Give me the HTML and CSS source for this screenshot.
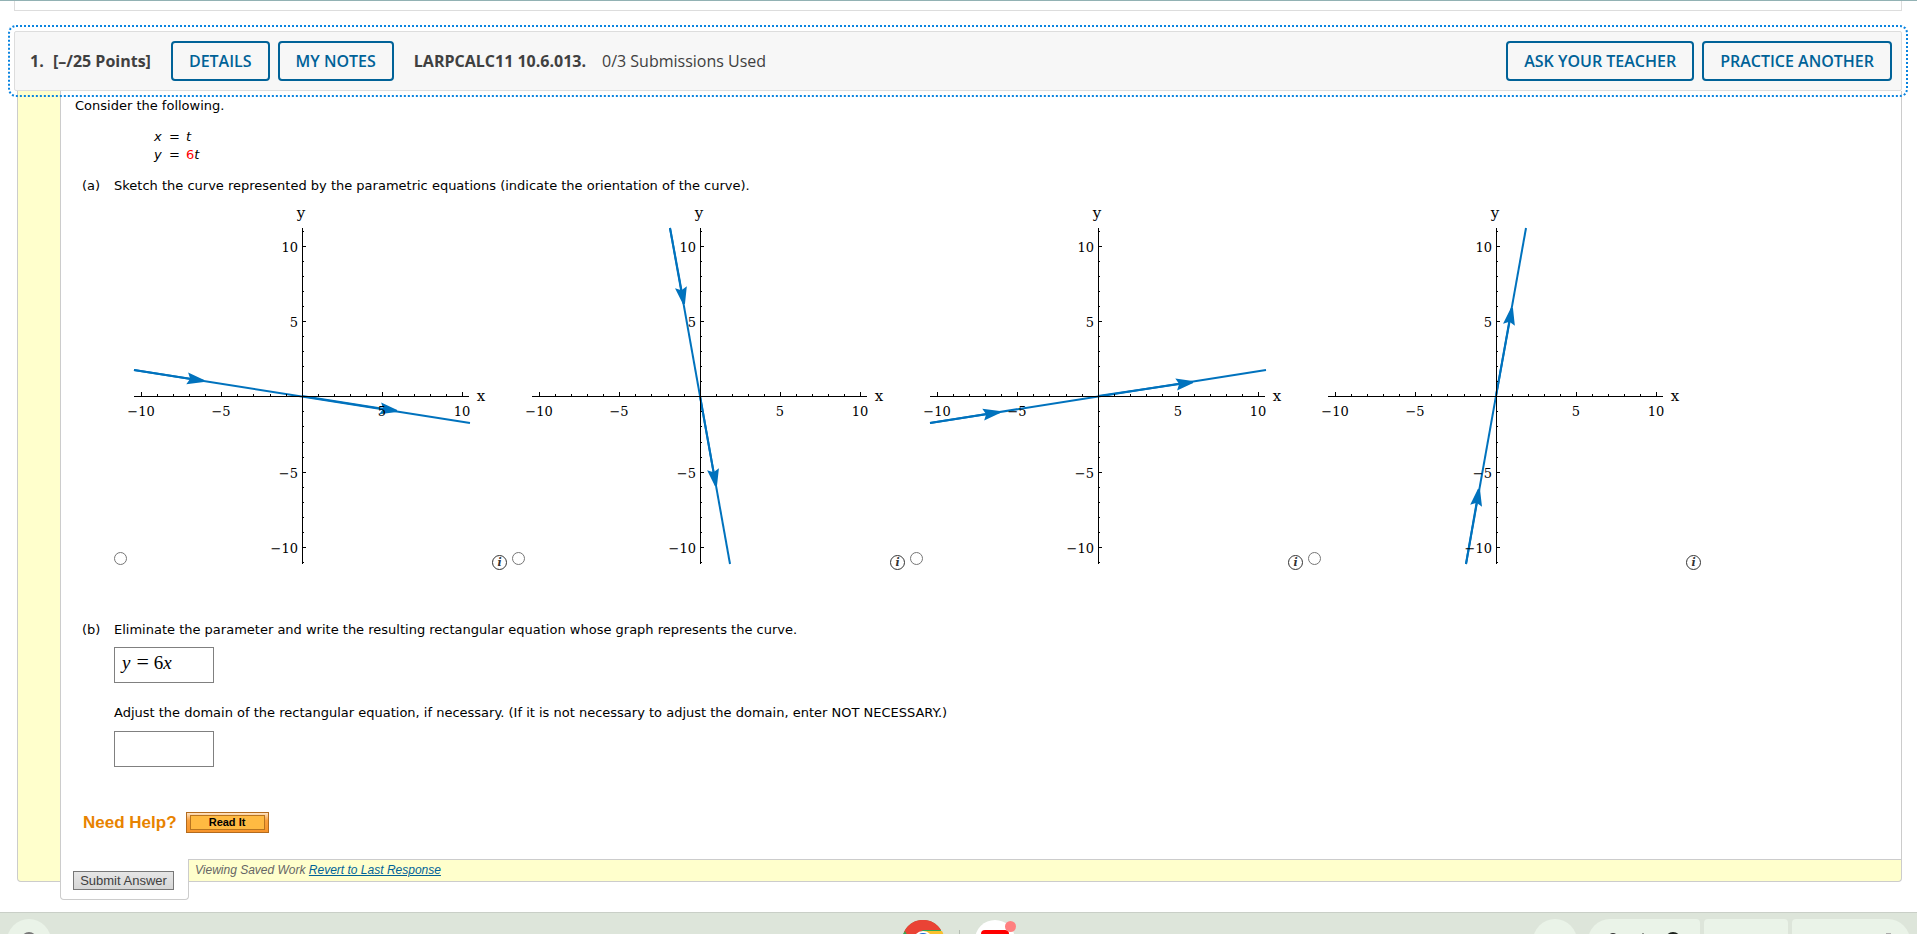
FILE: index.html
```
<!DOCTYPE html>
<html lang="en">
<head>
    <meta charset="UTF-8">
    <meta name="viewport" content="width=device-width, initial-scale=1.0">
    <title>LARPCALC11 10.6.013</title>
    <link rel="stylesheet" href="styles.css">
</head>
<body>

  <!-- shared graph parts -->
  <svg class="defs" width="0" height="0" aria-hidden="true">
    <defs>
      <marker id="arrow" viewBox="-18 -7 18 14" refX="0" refY="0" markerWidth="18" markerHeight="14" markerUnits="userSpaceOnUse" orient="auto">
        <path d="M0 -1L-17 -6L-14 0L-17 6L0 1Z" fill="#0072bd"/>
      </marker>
      <g id="axes" fill="none" stroke="#000" stroke-width="1">
        <path d="M-168 .5H167M.5 -168V168"/>
        <path d="M-160.5 0v-4M-80.5 0v-4M80.5 0v-4M160.5 0v-4"/>
        <path d="M-144.5 0v-2M-128.5 0v-2M-112.5 0v-2M-96.5 0v-2M-64.5 0v-2M-48.5 0v-2M-31.5 0v-2M-15.5 0v-2M16.5 0v-2M32.5 0v-2M48.5 0v-2M64.5 0v-2M96.5 0v-2M112.5 0v-2M128.5 0v-2M144.5 0v-2"/>
        <path d="M1 -149.5h3M1 -74.5h3M1 76.5h3M1 151.5h3"/>
        <path d="M1 -164.5h1M1 -134.5h1M1 -119.5h1M1 -104.5h1M1 -89.5h1M1 -59.5h1M1 -44.5h1M1 -29.5h1M1 -14.5h1M1 15.5h1M1 30.5h1M1 46.5h1M1 61.5h1M1 91.5h1M1 106.5h1M1 121.5h1M1 136.5h1M1 166.5h1"/>
      </g>
    </defs>
  </svg>

  <div class="previous-question"></div>

  <div class="question-header">
    <span class="number">1.</span>
    <span class="points">[–/25 Points]</span>
    <button class="button-outline">DETAILS</button>
    <button class="button-outline">MY NOTES</button>
    <span class="question-name">LARPCALC11 10.6.013.</span>
    <span class="submissions">0/3 Submissions Used</span>
    <div class="header-right">
      <button class="button-outline">ASK YOUR TEACHER</button>
      <button class="button-outline">PRACTICE ANOTHER</button>
    </div>
  </div>

  <div class="question">
    <div class="content">
      <p>Consider the following.</p>

      <div class="equations">
        <i>x</i><span>=</span><i>t</i>
        <i>y</i><span>=</span><span><span class="red">6</span><i>t</i></span>
      </div>

      <div class="part">
        <span class="part-label">(a)</span>
        <div class="part-body">
          <p>Sketch the curve represented by the parametric equations (indicate the orientation of the curve).</p>
          <div class="options">

            <div class="option">
              <input type="radio" name="graph" aria-label="Graph 1">
              <svg class="graph" viewBox="-175 -201 364 375">
                <path class="curve" d="M-168 -26L168 27"/>
                <path class="direction" d="M-168 -26L-98 -15"/>
                <path class="direction" d="M0 0L95 15"/>
                <use href="#axes"/>
                <g class="labels-x">
                  <text x="-161" y="20">−10</text><text x="-81" y="20">−5</text><text x="80" y="20">5</text><text x="160" y="20">10</text>
                </g>
                <g class="labels-y">
                  <text x="-4" y="-144">10</text><text x="-4" y="-69">5</text><text x="-4" y="82">−5</text><text x="-4" y="157">−10</text>
                </g>
                <g class="axis-name"><text x="179" y="5">x</text><text x="-1" y="-178">y</text></g>
              </svg>
              <button class="button-info" aria-label="Graph 1 description">i</button>
            </div>

            <div class="option">
              <input type="radio" name="graph" aria-label="Graph 2">
              <svg class="graph" viewBox="-175 -201 364 375">
                <path class="curve" d="M-30 -168L30 168"/>
                <path class="direction" d="M-30 -168L-16 -92"/>
                <path class="direction" d="M0 0L16 90"/>
                <use href="#axes"/>
                <g class="labels-x">
                  <text x="-161" y="20">−10</text><text x="-81" y="20">−5</text><text x="80" y="20">5</text><text x="160" y="20">10</text>
                </g>
                <g class="labels-y">
                  <text x="-4" y="-144">10</text><text x="-4" y="-69">5</text><text x="-4" y="82">−5</text><text x="-4" y="157">−10</text>
                </g>
                <g class="axis-name"><text x="179" y="5">x</text><text x="-1" y="-178">y</text></g>
              </svg>
              <button class="button-info" aria-label="Graph 2 description">i</button>
            </div>

            <div class="option">
              <input type="radio" name="graph" aria-label="Graph 3">
              <svg class="graph" viewBox="-175 -201 364 375">
                <path class="curve" d="M-168 27L168 -26"/>
                <path class="direction" d="M-168 27L-98 16"/>
                <path class="direction" d="M0 0L95 -14"/>
                <use href="#axes"/>
                <g class="labels-x">
                  <text x="-161" y="20">−10</text><text x="-81" y="20">−5</text><text x="80" y="20">5</text><text x="160" y="20">10</text>
                </g>
                <g class="labels-y">
                  <text x="-4" y="-144">10</text><text x="-4" y="-69">5</text><text x="-4" y="82">−5</text><text x="-4" y="157">−10</text>
                </g>
                <g class="axis-name"><text x="179" y="5">x</text><text x="-1" y="-178">y</text></g>
              </svg>
              <button class="button-info" aria-label="Graph 3 description">i</button>
            </div>

            <div class="option">
              <input type="radio" name="graph" aria-label="Graph 4">
              <svg class="graph" viewBox="-175 -201 364 375">
                <path class="curve" d="M-30 168L30 -168"/>
                <path class="direction" d="M-30 168L-17 93"/>
                <path class="direction" d="M0 0L16 -88"/>
                <use href="#axes"/>
                <g class="labels-x">
                  <text x="-161" y="20">−10</text><text x="-81" y="20">−5</text><text x="80" y="20">5</text><text x="160" y="20">10</text>
                </g>
                <g class="labels-y">
                  <text x="-4" y="-144">10</text><text x="-4" y="-69">5</text><text x="-4" y="82">−5</text><text x="-4" y="157">−10</text>
                </g>
                <g class="axis-name"><text x="179" y="5">x</text><text x="-1" y="-178">y</text></g>
              </svg>
              <button class="button-info" aria-label="Graph 4 description">i</button>
            </div>

          </div>
        </div>
      </div>

      <div class="part part-b">
        <span class="part-label">(b)</span>
        <div class="part-body">
          <p><label for="equation">Eliminate the parameter and write the resulting rectangular equation whose graph represents the curve.</label></p>
          <div class="math-field">
            <input class="answer" id="equation" type="text">
            <span class="math"><i>y</i><span class="equals">=</span>6<i>x</i></span>
          </div>
          <p class="domain"><label for="domain">Adjust the domain of the rectangular equation, if necessary. (If it is not necessary to adjust the domain, enter NOT NECESSARY.)</label></p>
          <div class="math-field">
            <input class="answer" id="domain" type="text">
          </div>
        </div>
      </div>

      <div class="help">
        <span class="help-title">Need Help?</span>
        <button class="button-read"><span>Read It</span></button>
      </div>
    </div>

    <div class="question-footer">
      <div class="submit-tab">
        <button class="button-submit">Submit Answer</button>
      </div>
      <div class="saved-work">Viewing Saved Work <a href="#">Revert to Last Response</a></div>
    </div>
  </div>

  <div class="shelf">
    <div class="shelf-left">
      <div class="shelf-circle">
        <svg width="44" height="44"><circle cx="22" cy="21" r="7" fill="none" stroke="#777" stroke-width="2"/></svg>
      </div>
    </div>
    <div class="shelf-apps">
      <svg width="42" height="42" viewBox="0 0 42 42">
        <circle cx="21" cy="21" r="21" fill="#34a853"/>
        <path d="M2 12L12 26L21 11H40A21 21 0 0 1 21 42Z" fill="#fbc02d"/>
        <path d="M3 10A21 21 0 0 1 39 10H21L5 22L2 12Z" fill="#ea4335"/>
        <path d="M0 21A21 21 0 0 1 3 11L10 24Z" fill="#34a853"/>
        <circle cx="21" cy="21" r="10" fill="#fff"/>
        <circle cx="21" cy="21" r="8" fill="#1a66d2"/>
      </svg>
      <span class="shelf-divider"></span>
      <div class="shelf-app">
        <svg width="40" height="40" viewBox="0 0 40 40">
          <circle cx="20" cy="20" r="20" fill="#fff"/>
          <rect x="6" y="10" width="28" height="20" rx="4" fill="#f00"/>
        </svg>
        <span class="badge"></span>
      </div>
    </div>
    <div class="shelf-right">
      <div class="shelf-circle"></div>
      <div class="shelf-pill pill-first">
        <svg width="112" height="44"><circle cx="25" cy="19" r="4" fill="none" stroke="#333" stroke-width="2"/><path d="M55 14v8" stroke="#333" stroke-width="1"/><circle cx="85" cy="21" r="8" fill="#1c211c"/></svg>
      </div>
      <div class="shelf-pill pill-middle"></div>
      <div class="shelf-pill pill-last">
        <svg width="118" height="44"><path d="M94 14h5v8h-5z" fill="#aaa"/></svg>
      </div>
    </div>
  </div>

</body>
</html>
```
FILE: styles.css
```
body {
    margin: 0px;
    height: 100vh;
    overflow: hidden;
    display: flex;
    flex-direction: column;
    box-sizing: border-box;
    border-top: 1px solid #92b2b4;
    background-color: #ffffff;
    font-family: Verdana, "DejaVu Sans", sans-serif;
    font-size: 13px;
    line-height: 18px;
    color: #000000;
}

p {
    margin: 0px;
}

button {
    cursor: pointer;
    margin: 0px;
}

.defs {
    position: absolute;
}

.previous-question {
    flex: none;
    height: 9px;
    margin: 0px 15px 20px 14px;
    border: 1px solid #dddddd;
    border-top: 0px;
}

/* question header */

.question-header {
    flex: none;
    position: relative;
    display: flex;
    align-items: center;
    box-sizing: border-box;
    height: 60px;
    margin: 0px 15px 0px 14px;
    padding: 0px 9px 0px 15px;
    background-color: #f7f7f7;
    border: 1px solid #dddddd;
    border-radius: 2px;
    outline: 2px dotted #0a84e0;
    outline-offset: 4px;
    font-family: "Open Sans", sans-serif;
    font-size: 16px;
    color: #404040;
}

.number {
    font-weight: 700;
    width: 23px;
}

.points {
    font-weight: 700;
    margin-right: 20px;
}

.button-outline {
    box-sizing: border-box;
    height: 40px;
    padding: 0px 16px;
    margin-right: 8px;
    border: 2px solid #006298;
    border-radius: 4px;
    background-color: transparent;
    color: #006298;
    font-family: "Open Sans", sans-serif;
    font-size: 16px;
    font-weight: 600;
}

.question-name {
    font-weight: 700;
    margin-left: 12px;
    margin-right: 16px;
}

.header-right {
    display: flex;
    gap: 8px;
    margin-left: auto;
}

.header-right .button-outline {
    margin-right: 0px;
}

/* question body */

.question {
    flex: none;
    margin: 0px 15px 0px 17px;
    background-color: #ffffcc;
    border: 1px solid #cccccc;
    border-top: 0px;
    border-radius: 0px 0px 4px 4px;
}

.content {
    margin-left: 42px;
    padding: 6px 14px 26px 14px;
    background-color: #ffffff;
    border-left: 1px solid #cccccc;
}

.equations {
    display: grid;
    grid-template-columns: 15px 17px auto;
    margin: 13px 0px 13px 79px;
}

.red {
    color: #ff0000;
}

.part {
    display: flex;
}

.part-label {
    width: 32px;
    margin-left: 7px;
}

.part-b {
    margin-top: 51px;
}

.options {
    display: flex;
    flex-wrap: wrap;
}

.option {
    display: flex;
    align-items: flex-end;
    margin-right: 5px;
}

.option input {
    width: 13px;
    height: 13px;
    margin: 0px 0px 5px 0px;
}

.graph {
    width: 364px;
    height: 375px;
    margin-right: 1px;
}

.graph text {
    font-family: "DejaVu Serif", serif;
    font-size: 13px;
}

.graph .axis-name text {
    font-size: 15px;
    text-anchor: middle;
}

.labels-x {
    text-anchor: middle;
}

.labels-y {
    text-anchor: end;
}

.curve {
    fill: none;
    stroke: #0072bd;
    stroke-width: 2;
}

.direction {
    fill: none;
    stroke: #0072bd;
    stroke-width: 2;
    marker-end: url(#arrow);
}

.button-info {
    width: 15px;
    height: 15px;
    padding: 0px;
    border: 1px solid #333333;
    border-radius: 50%;
    background-color: #ffffff;
    color: #333333;
    font-family: "DejaVu Serif", serif;
    font-size: 11px;
    font-style: italic;
    font-weight: bold;
    line-height: 13px;
}

.math-field {
    position: relative;
    display: flex;
    margin-top: 8px;
}

.answer {
    box-sizing: border-box;
    width: 100px;
    height: 36px;
    border: 1px solid #808080;
    background-color: #ffffff;
    font-family: "Liberation Serif", serif;
    font-size: 19px;
}

.math {
    position: absolute;
    left: 8px;
    top: 6px;
    font-family: "Liberation Serif", serif;
    font-size: 19px;
    line-height: 20px;
    pointer-events: none;
}

.equals {
    margin: 0px 5px 0px 6px;
    font-size: 22px;
    line-height: 18px;
}

.domain {
    margin-top: 21px;
}

.domain + .math-field {
    margin-top: 9px;
}

.help {
    display: flex;
    align-items: center;
    margin: 45px 0px 0px 8px;
}

.help-title {
    margin-right: 9px;
    font-family: "Liberation Sans", Arial, sans-serif;
    font-size: 17px;
    font-weight: bold;
    color: #e88300;
}

.button-read {
    box-sizing: border-box;
    width: 83px;
    height: 21px;
    padding: 2px 3px;
    border: 1px solid #b36b1e;
    background: linear-gradient(#fde3c4, #f9a03c 40%, #f7942a);
    font-family: "Liberation Sans", Arial, sans-serif;
    font-size: 11px;
    font-weight: bold;
}

.button-read span {
    display: block;
    line-height: 13px;
    border: 1px solid #b8741f;
    background-color: #ffba42;
}

.question-footer {
    display: flex;
    align-items: flex-start;
    height: 22px;
    font-family: "Liberation Sans", Arial, sans-serif;
}

/* hangs below the question box */
.submit-tab {
    position: relative;
    box-sizing: border-box;
    width: 129px;
    height: 41px;
    margin-left: 42px;
    padding: 12px 0px 0px 12px;
    background-color: #ffffff;
    border: 1px solid #cccccc;
    border-top: 0px;
    border-radius: 0px 0px 4px 4px;
}

.button-submit {
    box-sizing: border-box;
    display: block;
    width: 101px;
    height: 19px;
    padding: 0px;
    border: 1px solid #777777;
    background: linear-gradient(#e6e6e6, #d6d6d6);
    color: #404040;
    font-family: "Liberation Sans", Arial, sans-serif;
    font-size: 13px;
    line-height: 17px;
}

.saved-work {
    flex: 1;
    padding-left: 6px;
    border-top: 1px solid #cccccc;
    font-size: 12px;
    line-height: 21px;
    font-style: italic;
    color: #666666;
}

.saved-work a {
    color: #006298;
}

/* system shelf */

.shelf {
    flex: 1;
    display: flex;
    justify-content: space-between;
    min-height: 15px;
    margin-top: 30px;
    padding: 6px 7px 0px 7px;
    overflow: hidden;
    background-color: #dde5da;
    border-top: 1px solid #c9cfc7;
}

.shelf svg {
    display: block;
}

.shelf-left, .shelf-right {
    flex: 1;
    display: flex;
    height: 44px;
}

.shelf-right {
    justify-content: flex-end;
    gap: 4px;
}

.shelf-circle {
    width: 44px;
    height: 44px;
    border-radius: 50%;
    background-color: #eaf3e8;
}

.shelf-apps {
    display: flex;
    gap: 15px;
    padding-top: 1px;
}

.shelf-divider {
    width: 1px;
    height: 24px;
    margin-top: 10px;
    background-color: #b5bdb3;
}

.shelf-app {
    position: relative;
    height: 40px;
}

.badge {
    position: absolute;
    top: 1px;
    right: -1px;
    width: 11px;
    height: 11px;
    border-radius: 50%;
    background-color: #ff8080;
}

.shelf-pill {
    height: 44px;
    border-radius: 4px;
    background-color: #eaf3e8;
}

.pill-first {
    width: 112px;
    margin-left: 7px;
    border-radius: 22px 4px 4px 22px;
}

.pill-middle {
    width: 84px;
}

.pill-last {
    width: 118px;
    border-radius: 4px 22px 22px 4px;
}
```
